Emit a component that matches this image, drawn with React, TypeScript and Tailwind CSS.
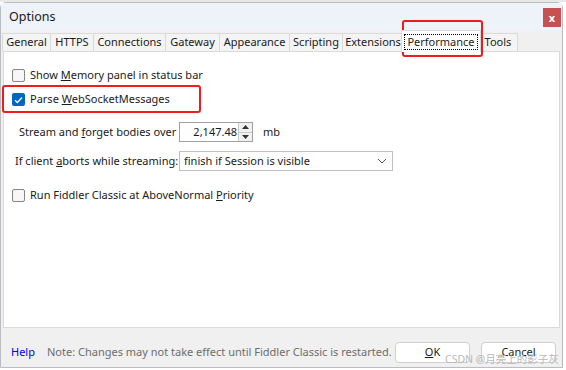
import React from "react";

const tabs: { label: string; w: number }[] = [
  { label: "General", w: 48 },
  { label: "HTTPS", w: 43 },
  { label: "Connections", w: 72 },
  { label: "Gateway", w: 54 },
  { label: "Appearance", w: 70 },
  { label: "Scripting", w: 53 },
  { label: "Extensions", w: 61 },
];

function Box({ checked }: { checked?: boolean }) {
  if (checked) {
    return (
      <span className="flex h-[13px] w-[13px] shrink-0 items-center justify-center rounded-[2px] bg-[#0067c0]">
        <svg width="9" height="8" viewBox="0 0 9 8">
          <path d="M1 4.2 L3.4 6.5 L8 1.5" stroke="#fff" strokeWidth="1.3" fill="none" />
        </svg>
      </span>
    );
  }
  return <span className="h-[13px] w-[13px] shrink-0 rounded-[2px] border border-[#858585] bg-[#f7f7f7]" />;
}

export default function App() {
  return (
    <div
      className="relative h-[370px] w-[566px] overflow-hidden whitespace-nowrap bg-white text-[11px] text-[#1a1a1a]"
      style={{ fontFamily: '"Noto Sans", "Open Sans", sans-serif' }}
    >
      <div className="h-[2px] w-full bg-[#e8e8e8]" />
      <div className="flex h-[366px] w-[563px] flex-col rounded-t-[6px] border border-[#b9bdc2] bg-[#f0f0f0]">
        {/* title bar */}
        <div className="flex h-[28px] shrink-0 items-center justify-between bg-[#eef3fa] pl-[8px] pr-[1px]">
          <span className="text-[12.5px] text-[#1a1a1a]">Options</span>
          <div className="flex h-[19px] w-[18px] items-center justify-center bg-[#c75050] text-[11px] font-bold leading-none text-white">
            x
          </div>
        </div>
        {/* tabs */}
        <div className="flex h-[20px] shrink-0 items-end pl-[1px]">
          {tabs.map((t) => (
            <div
              key={t.label}
              className="flex h-[18px] items-center justify-center overflow-hidden border border-b-0 border-r-0 border-[#dadada] bg-[#f4f4f4]"
              style={{ width: t.w }}
            >
              {t.label}
            </div>
          ))}
          <div className="relative z-10 mb-[-1px] ml-[-2px] mr-[-2px] flex h-[22px] w-[80px] items-center justify-center border border-b-0 border-[#dadada] bg-white">
            <span className="border border-dotted border-black px-[2px] leading-[14px]">Performance</span>
          </div>
          <div className="flex h-[18px] w-[39px] items-center justify-center border border-b-0 border-l-0 border-[#dadada] bg-[#f4f4f4]">
            Tools
          </div>
        </div>
        {/* panel */}
        <div className="mx-[2px] flex h-[277px] shrink-0 flex-col border border-[#dadada] bg-white pl-[8px] pt-[16px]">
          <label className="flex h-[15px] items-center gap-[5px]">
            <Box />
            <span>
              Show <u>M</u>emory panel in status bar
            </span>
          </label>
          <label className="mt-[9px] flex h-[15px] items-center gap-[5px]">
            <Box checked />
            <span>
              Parse <u>W</u>ebSocketMessages
            </span>
          </label>
          <div className="mt-[15px] flex h-[20px] items-center">
            <span className="ml-[7px] w-[160px]">
              Stream and <u>f</u>orget bodies over
            </span>
            <div className="flex h-[20px] w-[74px] items-center border border-[#a0a0a0] bg-white">
              <span className="flex-1 pr-[1px] text-right">2,147.48</span>
              <div className="flex h-[18px] w-[14px] flex-col border-l border-[#c8c8c8] bg-[#f0f0f0]">
                <div className="flex flex-1 items-center justify-center border-b border-[#c8c8c8]">
                  <svg width="7" height="4" viewBox="0 0 7 4">
                    <path d="M0 4 L3.5 0 L7 4 Z" fill="#333" />
                  </svg>
                </div>
                <div className="flex flex-1 items-center justify-center">
                  <svg width="7" height="4" viewBox="0 0 7 4">
                    <path d="M0 0 L3.5 4 L7 0 Z" fill="#333" />
                  </svg>
                </div>
              </div>
            </div>
            <span className="ml-[10px]">mb</span>
          </div>
          <div className="mt-[9px] flex h-[20px] items-center">
            <span className="ml-[3px] w-[164px]">
              If client <u>a</u>borts while streaming:
            </span>
            <div className="flex h-[20px] w-[214px] items-center justify-between border border-[#c0c0c0] bg-white pl-[4px] pr-[5px]">
              <span>finish if Session is visible</span>
              <svg width="10" height="6" viewBox="0 0 10 6">
                <path d="M1 1 L5 5 L9 1" stroke="#555" strokeWidth="1" fill="none" />
              </svg>
            </div>
          </div>
          <label className="mt-[17px] flex h-[15px] items-center gap-[5px]">
            <Box />
            <span>
              Run Fiddler Classic at AboveNormal <u>P</u>riority
            </span>
          </label>
        </div>
        {/* footer */}
        <div className="flex flex-1 items-center pl-[10px] pr-[6px] pt-[9px]">
          <span className="text-[#0000ee]">Help</span>
          <span className="ml-[12px] text-[#6d6d6d]">
            Note: Changes may not take effect until Fiddler Classic is restarted.
          </span>
          <div className="ml-auto flex gap-[11px]">
            <div className="flex h-[21px] w-[75px] items-center justify-center rounded-[4px] border border-[#d0d0d0] bg-white">
              <span>
                <u>O</u>K
              </span>
            </div>
            <div className="flex h-[21px] w-[75px] items-center justify-center rounded-[4px] border border-[#d0d0d0] bg-white">
              Cancel
            </div>
          </div>
        </div>
      </div>
      {/* annotations */}
      <div className="absolute left-[402px] top-[20px] h-[37px] w-[81px] rounded-[3px] border-2 border-[#ee1c1c]" />
      <div className="absolute left-[2px] top-[85px] h-[28px] w-[199px] rounded-[3px] border-2 border-[#ee1c1c]" />
      <div
        className="absolute left-[445px] top-[352px] text-[10.5px] leading-[14px] text-[#b8b8b8]"
        style={{ fontFamily: '"Noto Sans", "Noto Sans CJK SC", sans-serif' }}
      >
        CSDN @月亮上的影子灰
      </div>
    </div>
  );
}
